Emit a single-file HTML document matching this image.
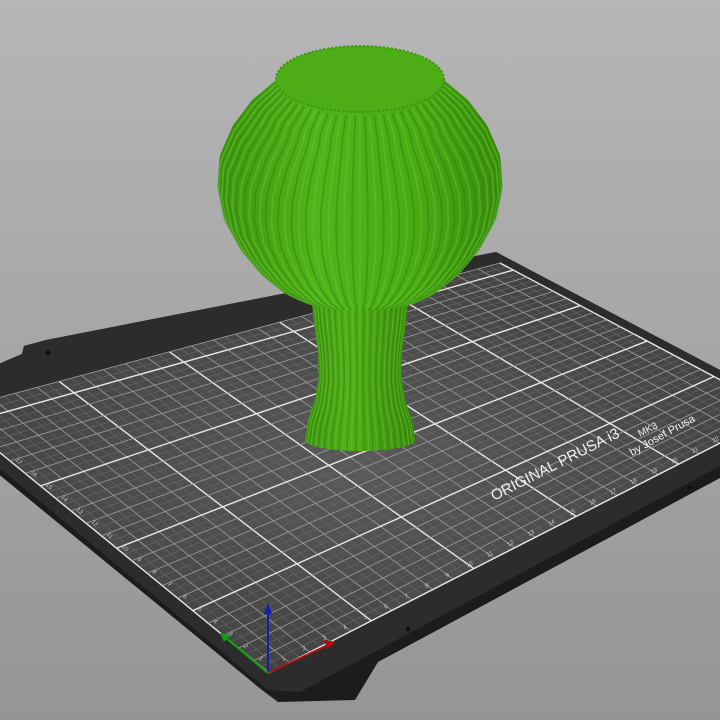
<!DOCTYPE html>
<html><head><meta charset="utf-8"><style>
html,body{margin:0;padding:0;width:720px;height:720px;overflow:hidden;background:#a4a4a4}
svg{display:block}
</style></head><body>
<svg id="s" width="720" height="720" viewBox="0 0 720 720" xmlns="http://www.w3.org/2000/svg">
<defs>
<linearGradient id="bg" x1="0" y1="0" x2="0" y2="1"><stop offset="0" stop-color="#b6b6b6"/><stop offset="1" stop-color="#959595"/></linearGradient>
<radialGradient id="pl" cx="0.5" cy="0.5" r="0.6"><stop offset="0" stop-color="#5a5a5a"/><stop offset="1" stop-color="#3e3e3e"/></radialGradient>
<linearGradient id="capg" x1="0" y1="0" x2="1" y2="0"><stop offset="0" stop-color="#3f9610"/><stop offset="0.35" stop-color="#52b41a"/><stop offset="0.7" stop-color="#4aaa14"/><stop offset="1" stop-color="#3a8c0e"/></linearGradient>
<linearGradient id="stem" x1="0" y1="0" x2="1" y2="0"><stop offset="0" stop-color="#3f9a10"/><stop offset="0.4" stop-color="#52b01a"/><stop offset="1" stop-color="#3a8c0e"/></linearGradient>
</defs>
<rect width="720" height="720" fill="url(#bg)"/>
<path d="M496,252 L720,370 L720,478 L378,662 L355,700 L278,702 L262,690 L-20,459 L-20,372 L22,354 L24,346 L46,340 Z" fill="#1c1c1c"/>
<path d="M496,252 L720,370 L720,466 L300,692 L268,690 L-20,452 L-20,372 L22,354 L24,346 L46,340 Z" fill="#2c2c2c"/>
<g id="plate"></g>
<g id="mush"></g>
</svg>
<script>
var s=document.getElementById('plate'),NS='http://www.w3.org/2000/svg';
function el(p,t,a){var e=document.createElementNS(NS,t);for(var k in a)e.setAttribute(k,a[k]);p.appendChild(e);return e;}
var B=[269,673],R=[781,412],T=[500,263],L=[-51,411];
function lp(a,b,t){return [a[0]+(b[0]-a[0])*t,a[1]+(b[1]-a[1])*t];}
function P(u,v){var a=lp(B,R,u),b=lp(L,T,u);return lp(a,b,v);}
el(s,'path',{d:'M'+B+' L'+R+' L'+T+' L'+L+' Z',fill:'url(#pl)'});
var NX=25,NY=21;
function line(u1,v1,u2,v2,c,w){var a=P(u1,v1),b=P(u2,v2);el(s,'line',{x1:a[0],y1:a[1],x2:b[0],y2:b[1],stroke:c,'stroke-width':w});}
for(var i=0;i<=NX*2;i++){var u=i/(NX*2);line(u,0,u,1,'#676767',0.6);}
for(var j=0;j<=NY*2;j++){var v=j/(NY*2);line(0,v,1,v,'#676767',0.6);}
for(var i=0;i<=NX;i++){var u=i/NX;line(u,0,u,1,i%5==0?'#e8e8e8':'#9a9a9a',i%5==0?1.4:0.8);}
for(var j=0;j<=NY;j++){var v=j/NY;line(0,v,1,v,j%5==0?'#e8e8e8':'#9a9a9a',j%5==0?1.4:0.8);}
for(var i=1;i<=22;i++){var p=P(i/NX,0.012);el(s,'text',{x:p[0]-3,y:p[1],'font-size':6,fill:'#ccc','font-family':'Liberation Sans',transform:'rotate(-30 '+p[0]+' '+p[1]+')'}).textContent=i;}
for(var j=1;j<=17;j++){var p=P(0.012,j/NY);el(s,'text',{x:p[0],y:p[1]+2,'font-size':6,fill:'#ccc','font-family':'Liberation Sans',transform:'rotate(45 '+p[0]+' '+p[1]+')'}).textContent=j;}
var t=el(s,'text',{x:494,y:501,'font-size':15,fill:'#f0f0f0','font-family':'Liberation Sans',transform:'rotate(-27 494 501)'});t.textContent='ORIGINAL PRUSA i3';
var t2=el(s,'text',{x:640,y:437,'font-size':10,fill:'#f0f0f0','font-family':'Liberation Sans',transform:'rotate(-27 640 437)'});t2.textContent='MK3';
var t3=el(s,'text',{x:632,y:456,'font-size':11,fill:'#f0f0f0','font-family':'Liberation Sans',transform:'rotate(-29 632 456)'});t3.textContent='by Josef Prusa';
[[408,629],[690,488],[48,353]].forEach(function(h){el(s,'circle',{cx:h[0],cy:h[1],r:2.5,fill:'#111'});});
el(s,'line',{x1:268,y1:673,x2:268,y2:612,stroke:'#1020b0','stroke-width':2});
el(s,'path',{d:'M264,614 L268,603 L272,614Z',fill:'#1020b0'});
el(s,'line',{x1:268,y1:673,x2:328,y2:645,stroke:'#b01010','stroke-width':2});
el(s,'path',{d:'M324,640 L336,642 L327,649Z',fill:'#b01010'});
el(s,'line',{x1:268,y1:673,x2:226,y2:638,stroke:'#10a010','stroke-width':2});
el(s,'path',{d:'M220,633 L230,635 L224,642Z',fill:'#10a010'});
// mushroom
var m=document.getElementById('mush');
// stem
var sp=[[300,48],[320,46],[350,42],[375,41],[400,45],[420,52],[440,55]];
function sw(y,pr){for(var i=0;i<pr.length-1;i++){if(y<=pr[i+1][0]){var t=(y-pr[i][0])/(pr[i+1][0]-pr[i][0]);return pr[i][1]+(pr[i+1][1]-pr[i][1])*t;}}return pr[pr.length-1][1];}
function shape(pr,cx,ryf){var d='',y0=pr[0][0],y1=pr[pr.length-1][0];for(var y=y0;y<=y1;y+=2){d+=(d?'L':'M')+(cx-sw(y,pr))+','+y;}
for(var k=0;k<=40;k++){var a=Math.PI*k/40,w=sw(y1,pr);d+='L'+(cx-Math.cos(a)*w)+','+(y1+Math.sin(a)*w*ryf);}
for(var y=y1;y>=y0;y-=2){d+='L'+(cx+sw(y,pr))+','+y;}return d+'Z';}
el(m,'path',{d:shape(sp,360,0.2),fill:'url(#stem)'});
for(var k=1;k<40;k++){var a=Math.PI*k/40,d='';for(var y=300;y<=440;y+=4){var w=sw(y,sp);d+=(d?'L':'M')+(360-Math.cos(a)*w)+','+(y+Math.sin(a)*w*0.2);}
el(m,'path',{d:d,stroke:k%2?'#2f7a0a':'#66c428','stroke-width':1.3,fill:'none',opacity:0.5});}
// cap
var cp=[[80,84],[100,108],[125,127],[155,140],[185,142],[215,136],[245,120],[270,100],[290,76],[300,55]];
var cd='';for(var y=80;y<=300;y+=2){cd+=(cd?'L':'M')+(360-sw(y,cp))+','+(y);}
for(var k=0;k<=40;k++){var a=Math.PI*k/40;cd+='L'+(360-Math.cos(a)*55)+','+(300+Math.sin(a)*8);}
for(var y=300;y>=80;y-=2){cd+='L'+(360+sw(y,cp))+','+y;}
el(m,'path',{d:cd+'Z',fill:'url(#capg)'});
for(var k=1;k<56;k++){var a=Math.PI*k/56,d='';for(var y=80;y<=300;y+=4){var w=sw(y,cp);var ry=0.38*(1-(y-80)/260)+0.12;d+=(d?'L':'M')+(360-Math.cos(a)*w)+','+(y+Math.sin(a)*w*ry*(y<100?0.85:1)-(y==80?0:0));}
el(m,'path',{d:d,stroke:k%2?'#2f800a':'#66c82c','stroke-width':1.8,fill:'none',opacity:0.45});}
el(m,'ellipse',{cx:360,cy:79,rx:84,ry:33,fill:'#4cad16',stroke:'#3f9410','stroke-width':2,'stroke-dasharray':'2 2'});
el(m,'ellipse',{cx:360,cy:78,rx:78,ry:29,fill:'#4ead17'});
</script>
</body></html>
